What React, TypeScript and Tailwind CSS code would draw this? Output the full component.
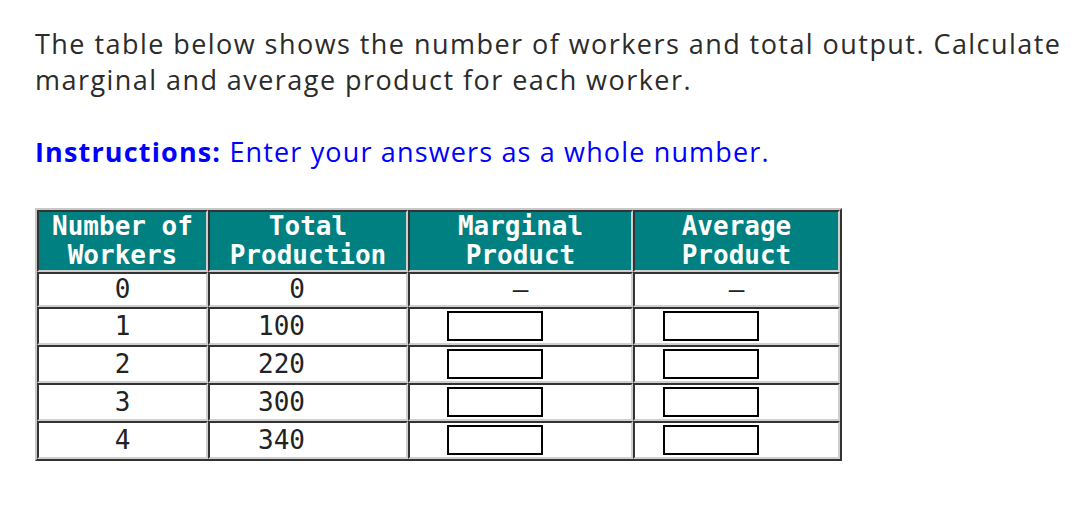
const ROWS = [
  { workers: 0, total: 0 },
  { workers: 1, total: 100 },
  { workers: 2, total: 220 },
  { workers: 3, total: 300 },
  { workers: 4, total: 340 },
];

const mono = "font-['DejaVu_Sans_Mono',Menlo,monospace]";
const cell = "border-2 border-t-[#333] border-l-[#333] border-b-[#cfcfcf] border-r-[#cfcfcf] text-center p-0";

function AnswerBox() {
  return (
    <div className="flex justify-center pr-[52px] py-[2px]">
      <input
        type="text"
        className="w-[96px] h-[30px] border-2 border-solid border-black bg-white outline-none"
      />
    </div>
  );
}

export default function App() {
  return (
    <div className="pl-[35px] pt-[26px] bg-white min-h-[508px] font-['Open_Sans',sans-serif]">
      <p className="w-[1035px] text-[27px] leading-[36px] tracking-[1.45px] text-[#2b2b2b]">
        The table below shows the number of workers and total output. Calculate marginal and average product for each worker.
      </p>
      <p className="mt-[36px] text-[27px] leading-[36px] tracking-[1.15px] text-[#0000ff]">
        <span className="font-bold">Instructions:</span> Enter your answers as a whole number.
      </p>

      <table
        className={`mt-[38px] border-separate border-spacing-0 border-2 border-t-[#c8c8c8] border-l-[#c8c8c8] border-b-[#333] border-r-[#333] ${mono} text-[26px]`}
      >
        <thead>
          <tr className="bg-[#008080] text-white font-bold leading-[29px]">
            <th className={`${cell} w-[171px] font-bold`}>Number of<br />Workers</th>
            <th className={`${cell} w-[200px] font-bold`}>Total<br />Production</th>
            <th className={`${cell} w-[225px] font-bold`}>Marginal<br />Product</th>
            <th className={`${cell} w-[207px] font-bold`}>Average<br />Product</th>
          </tr>
        </thead>
        <tbody className="text-[#222] leading-[29px]">
          {ROWS.map((r) => (
            <tr key={r.workers}>
              <td className={`${cell} py-[1px]`}>{r.workers}</td>
              <td className={`${cell} py-[1px] !text-right !pr-[101px]`}>{r.total}</td>
              {r.workers === 0 ? (
                <>
                  <td className={cell}>—</td>
                  <td className={cell}>—</td>
                </>
              ) : (
                <>
                  <td className={cell}><AnswerBox /></td>
                  <td className={cell}><AnswerBox /></td>
                </>
              )}
            </tr>
          ))}
        </tbody>
      </table>
    </div>
  );
}
